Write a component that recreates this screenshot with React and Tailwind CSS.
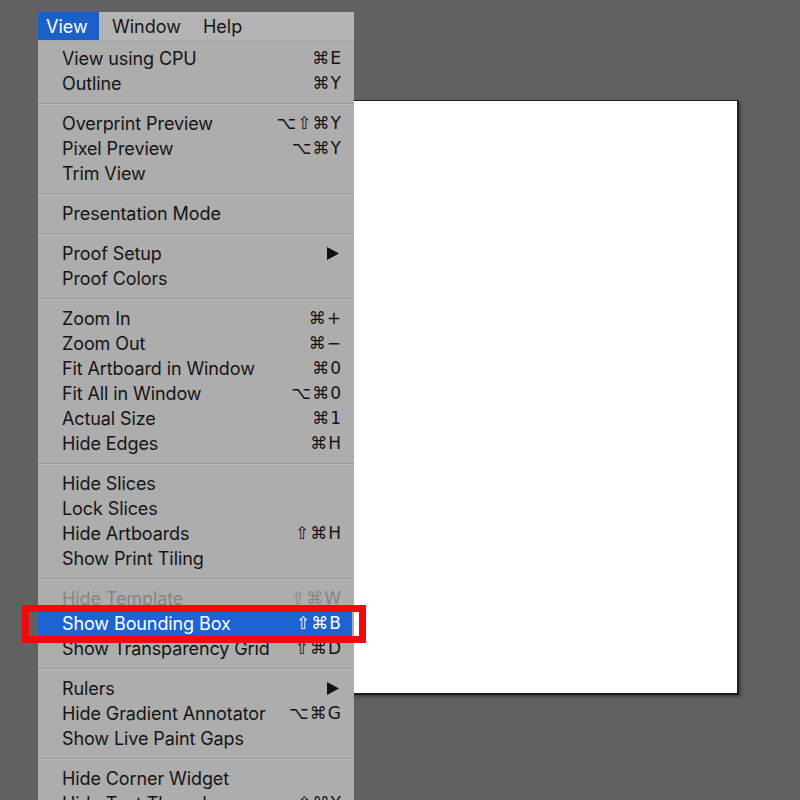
import React from 'react'

const groups = [
  [
    { label: 'View using CPU', key: '⌘E' },
    { label: 'Outline', key: '⌘Y' },
  ],
  [
    { label: 'Overprint Preview', key: '⌥⇧⌘Y' },
    { label: 'Pixel Preview', key: '⌥⌘Y' },
    { label: 'Trim View' },
  ],
  [{ label: 'Presentation Mode' }],
  [
    { label: 'Proof Setup', sub: true },
    { label: 'Proof Colors' },
  ],
  [
    { label: 'Zoom In', key: '⌘+' },
    { label: 'Zoom Out', key: '⌘−' },
    { label: 'Fit Artboard in Window', key: '⌘0' },
    { label: 'Fit All in Window', key: '⌥⌘0' },
    { label: 'Actual Size', key: '⌘1' },
    { label: 'Hide Edges', key: '⌘H' },
  ],
  [
    { label: 'Hide Slices' },
    { label: 'Lock Slices' },
    { label: 'Hide Artboards', key: '⇧⌘H' },
    { label: 'Show Print Tiling' },
  ],
  [
    { label: 'Hide Template', key: '⇧⌘W', disabled: true },
    { label: 'Show Bounding Box', key: '⇧⌘B', active: true },
    { label: 'Show Transparency Grid', key: '⇧⌘D' },
  ],
  [
    { label: 'Rulers', sub: true },
    { label: 'Hide Gradient Annotator', key: '⌥⌘G' },
    { label: 'Show Live Paint Gaps' },
  ],
  [
    { label: 'Hide Corner Widget' },
    { label: 'Hide Text Threads', key: '⇧⌘Y' },
  ],
]

const MenuRow = ({ item }) => {
  const color = item.active
    ? 'bg-[#1d63d2] text-white'
    : item.disabled
    ? 'text-[#858585]'
    : 'text-[#141414]'
  return (
    <div className={`h-[25px] flex items-center justify-between pl-[24px] pr-[10px] mr-[2px] ${color}`}>
      <span className="tracking-[-0.1px]">{item.label}</span>
      {item.key && (
        <span className="font-['DejaVu_Sans',sans-serif] text-[17px] tracking-[1px]">{item.key}</span>
      )}
      {item.sub && (
        <svg width="12" height="13" viewBox="0 0 12 13" className="mr-[3px]">
          <path d="M0 0 L12 6.5 L0 13 Z" fill="#111" />
        </svg>
      )}
    </div>
  )
}

const Separator = () => (
  <div className="h-[15px] flex flex-col justify-center">
    <div className="h-px bg-[#9a9a9a]" />
    <div className="h-px bg-[#b9b9b9]" />
  </div>
)

const App = () => {
  return (
    <div className="relative w-[800px] h-[800px] overflow-hidden bg-[#616161] font-['Inter',sans-serif] text-[18px]">
      {/* artboard */}
      <div className="absolute left-[300px] top-[100px] w-[439px] h-[595px] bg-white border border-[#1e1e1e] border-r-2 border-b-2 shadow-[2px_2px_3px_rgba(0,0,0,0.35)]" />

      {/* menu */}
      <div className="absolute left-[38px] top-[12px] w-[316px] h-[800px] bg-[#adadad]">
        <div className="h-[29px] flex items-center bg-[#b4b4b4] text-[#141414] border-b border-[#a3a3a3]">
          <div className="h-full w-[61px] pl-[8px] flex items-center bg-[#1b60c9] text-white">View</div>
          <div className="ml-[13px]">Window</div>
          <div className="ml-[22px]">Help</div>
        </div>
        <div className="pt-[5px]">
          {groups.map((g, i) => (
            <div key={i}>
              {i > 0 && <Separator />}
              {g.map((item) => (
                <MenuRow key={item.label} item={item} />
              ))}
            </div>
          ))}
        </div>
      </div>

      {/* red highlight annotation */}
      <div className="absolute left-[22px] top-[605px] w-[344px] h-[38px] border-[7px] border-[#f20a0a]" />
    </div>
  )
}

export default App
